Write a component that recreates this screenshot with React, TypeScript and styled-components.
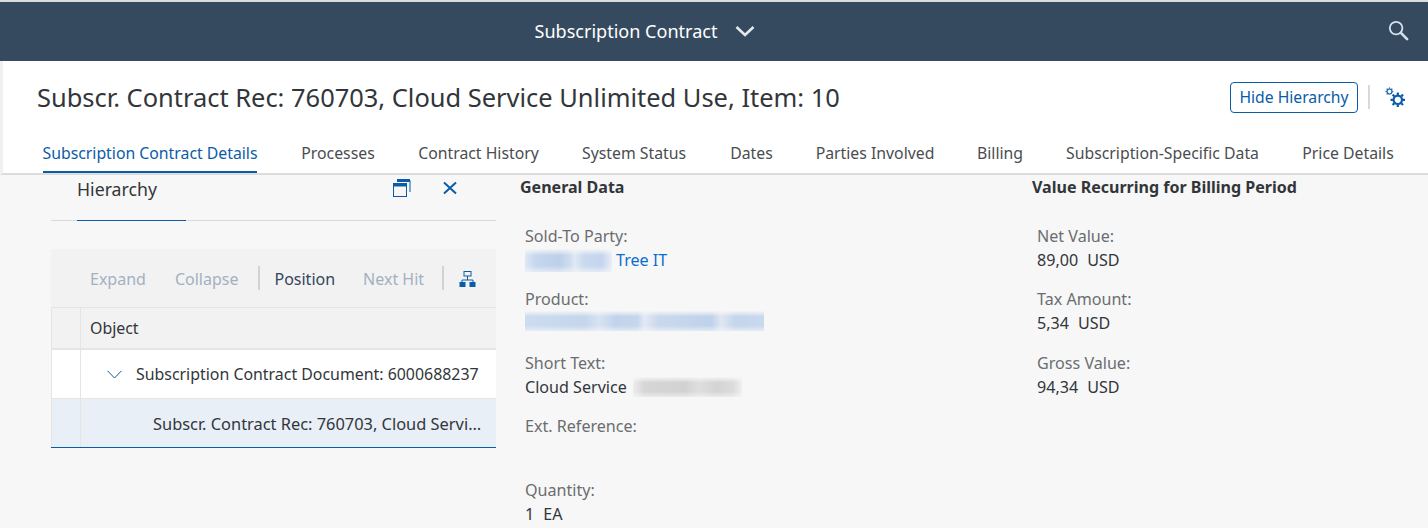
import React from "react";
import styled, { createGlobalStyle } from "styled-components";

const Global = createGlobalStyle`
  html, body { margin: 0; padding: 0; background: #f7f7f7; }
  body { font-family: "Noto Sans", "Open Sans", sans-serif; overflow: hidden; }
  #root { width: 1428px; height: 528px; overflow: hidden; }
`;

const Page = styled.div`
  width: 1428px;
  height: 528px;
  display: flex;
  flex-direction: column;
  background: #f7f7f7;
  overflow: hidden;
`;
const TopStrip = styled.div`
  height: 2px;
  flex: none;
  background: #dcdcdc;
`;
const ShellBar = styled.header`
  height: 59px;
  flex: none;
  background: #354a5f;
  display: flex;
  align-items: center;
  justify-content: center;
  position: relative;
  color: #fff;
  font-size: 18.05px;
  gap: 18px;
  padding: 0 138px 2px 0;
  box-sizing: border-box;
`;
const SearchBtn = styled.span`
  position: absolute;
  right: 19px;
  top: 18px;
  width: 21px;
  height: 21px;
`;
const ObjectHeader = styled.section`
  height: 114px;
  flex: none;
  box-sizing: border-box;
  border-left: 3px solid #eff0f2;
  background: #fff;
  border-bottom: 2px solid #dcdcdc;
  display: flex;
  flex-direction: column;
`;
const TitleRow = styled.div`
  height: 72px;
  flex: none;
  display: flex;
  align-items: center;
  padding: 0 23px 0 34px;
`;
const Title = styled.h1`
  margin: 0;
  flex: 1;
  font-size: 25.45px;
  font-weight: 400;
  color: #32363a;
  white-space: nowrap;
`;
const HideBtn = styled.button`
  height: 31px;
  width: 128px;
  box-sizing: border-box;
  border: 1px solid #0a5ca8;
  border-radius: 4px;
  background: #fff;
  color: #0a5ca8;
  font: inherit;
  font-size: 15.7px;
  padding: 0;
`;
const Sep = styled.span`
  width: 2px;
  height: 24px;
  background: #d5dadd;
  margin: 0 15px 0 10px;
`;
const Tabs = styled.nav`
  display: flex;
  padding-left: 40px;
  gap: 43px;
  height: 40px;
  flex: none;
`;
const Tab = styled.span<{ $active?: boolean; $w: number }>`
  width: ${(p) => p.$w}px;
  display: flex;
  justify-content: center;
  font-size: 15.8px;
  line-height: 1;
  padding-top: 13px;
  box-sizing: border-box;
  height: 40px;
  white-space: nowrap;
  color: ${(p) => (p.$active ? "#0a5ca8" : "#4a4d50")};
  border-bottom: ${(p) => (p.$active ? "2px solid #0a5ca8" : "none")};
`;
const Body = styled.main`
  flex: 1;
  display: flex;
  min-height: 0;
`;
const LeftPane = styled.aside`
  width: 445px;
  margin-left: 51px;
  flex: none;
`;
const PaneHead = styled.div`
  height: 46px;
  box-sizing: border-box;
  border-bottom: 1px solid #d9d9d9;
  display: flex;
  padding-left: 26px;
`;
const PaneTab = styled.div`
  width: 109px;
  height: 46px;
  box-sizing: border-box;
  border-bottom: 1px solid #0a5ca8;
  color: #32363a;
  font-size: 17.7px;
  line-height: 1;
  padding-top: 6px;
`;
const PaneIcons = styled.div`
  margin-left: auto;
  display: flex;
  align-items: flex-start;
  gap: 32px;
  padding: 3px 39px 0 0;
`;
const Toolbar = styled.div`
  margin-top: 28px;
  height: 58px;
  background: #f2f2f2;
  display: flex;
  align-items: center;
  padding: 2px 0 0 39px;
  box-sizing: border-box;
  font-size: 16px;
`;
const ToolBtn = styled.span<{ $on?: boolean; $gap?: number }>`
  color: ${(p) => (p.$on ? "#32465c" : "#a3b1bf")};
  margin-right: ${(p) => p.$gap ?? 0}px;
  white-space: nowrap;
`;
const ToolSep = styled.span<{ $right: number }>`
  width: 2px;
  height: 24px;
  margin-top: -2px;
  background: #cfd3d6;
  margin-right: ${(p) => p.$right}px;
`;
const Row = styled.div<{ $h: number; $bg: string; $line: string; $size?: number }>`
  height: ${(p) => p.$h}px;
  box-sizing: border-box;
  display: flex;
  background: ${(p) => p.$bg};
  border-top: 1px solid #e5e5e5;
  border-bottom: ${(p) => p.$line};
  color: #32363a;
  font-size: ${(p) => p.$size ?? 15.9}px;
`;
const Selector = styled.div`
  width: 30px;
  flex: none;
  box-sizing: border-box;
  border-left: 1px solid #e5e5e5;
  border-right: 1px solid #e5e5e5;
`;
const Cell = styled.div<{ $indent: number }>`
  flex: 1;
  min-width: 0;
  display: flex;
  align-items: center;
  gap: 14px;
  padding-left: ${(p) => p.$indent}px;
  white-space: nowrap;
`;
const Clipped = styled.span`
  width: 332px;
  overflow: hidden;
  text-overflow: ellipsis;
  white-space: nowrap;
`;
const Content = styled.div`
  flex: 1;
  display: grid;
  grid-template-columns: 512px 1fr;
  padding-left: 24px;
`;
const Column = styled.section`
  display: flex;
  flex-direction: column;
`;
const GroupTitle = styled.h2`
  margin: 0;
  height: 49px;
  padding-top: 1px;
  box-sizing: border-box;
  font-size: 16.05px;
  font-weight: 700;
  color: #32363a;
  white-space: nowrap;
`;
const Field = styled.div`
  height: 63.45px;
  padding-left: 5px;
  font-size: 16.1px;
  line-height: 24px;
  flex: none;
`;
const Label = styled.div`
  color: #6a6d70;
`;
const Value = styled.div<{ $gap?: number }>`
  color: #32363a;
  display: flex;
  align-items: center;
  gap: ${(p) => p.$gap ?? 9}px;
  white-space: nowrap;
`;
const LinkText = styled.span`
  color: #0a6ed1;
`;
const Redacted = styled.span<{ $w: number; $h: number; $stops: string }>`
  display: inline-block;
  width: ${(p) => p.$w}px;
  height: ${(p) => p.$h}px;
  background:
    linear-gradient(180deg, #f7f7f7f0 0%, #f7f7f700 28%, #f7f7f700 72%, #f7f7f7a0 100%),
    linear-gradient(90deg, ${(p) => p.$stops});
`;

const tabs: [string, number][] = [
  ["Processes", 76],
  ["Contract History", 119],
  ["System Status", 106],
  ["Dates", 43],
  ["Parties Involved", 118],
  ["Billing", 46],
  ["Subscription-Specific Data", 193],
  ["Price Details", 92],
];

const soldTo =
  "#dfe8f4 0%, #c6d7ee 12%, #bdd0ea 40%, #cfddf0 52%, #e0e9f4 57%, #c9d9ef 68%, #c4d5ed 88%, #e8eef6 100%";
const product =
  "#cddcf0 0%, #c4d5ec 25%, #d8e3f2 31%, #c1d3eb 38%, #c6d6ec 47%, #e2e9f3 50%, #c9d8ed 56%, #bfd2eb 78%, #dfe7f2 82%, #c4d5ec 88%, #c9d9ee 100%";
const shortText =
  "#eeeeee 0%, #d6d6d6 10%, #d2d2d2 48%, #dedede 60%, #d4d4d4 78%, #dcdcdc 92%, #f0f0f0 100%";

export default function App() {
  return (
    <Page>
      <Global />
      <TopStrip />
      <ShellBar>
        <span>Subscription Contract</span>
        <svg width="20" height="12" viewBox="0 0 20 12" fill="none">
          <path d="M1.5 2 L10 10 L18.5 2" stroke="#e4e9ee" strokeWidth="2.6" />
        </svg>
        <SearchBtn>
          <svg width="21" height="21" viewBox="0 0 22 22" fill="none" stroke="#d1e1ee">
            <circle cx="8.5" cy="8.5" r="6.6" strokeWidth="1.9" />
            <path d="M13.5 13.5 L20 20" strokeWidth="2.8" strokeLinecap="round" />
          </svg>
        </SearchBtn>
      </ShellBar>
      <ObjectHeader>
        <TitleRow>
          <Title>Subscr. Contract Rec: 760703, Cloud Service Unlimited Use, Item: 10</Title>
          <HideBtn>Hide Hierarchy</HideBtn>
          <Sep />
          <svg width="20" height="20" viewBox="0 0 20 20" fill="none" stroke="#0a5ca8">
            <circle cx="4.5" cy="4.5" r="2.5" strokeWidth="1.2" />
            <path d="M4.5 .5v1.2M.5 4.5h1.2M7.3 4.5h1M1.7 1.7l.8.8M7.3 1.7l-.8.8M1.7 7.3l.8-.8" strokeWidth="1.2" />
            <circle cx="12.8" cy="12.8" r="4.2" strokeWidth="2.2" />
            <path d="M12.8 5.5v2.4M12.8 17.7v2.3M5.5 12.8h2.4M17.7 12.8h2.3M7.6 7.6l1.7 1.7M16.3 16.3l1.7 1.7M18 7.6l-1.7 1.7M9.3 16.3l-1.7 1.7" strokeWidth="2.2" />
          </svg>
        </TitleRow>
        <Tabs>
          <Tab $active $w={214}>Subscription Contract Details</Tab>
          {tabs.map(([t, w]) => (
            <Tab key={t} $w={w}>{t}</Tab>
          ))}
        </Tabs>
      </ObjectHeader>
      <Body>
        <LeftPane>
          <PaneHead>
            <PaneTab>Hierarchy</PaneTab>
            <PaneIcons>
              <svg width="18" height="20" viewBox="0 0 18 20" fill="none">
                <path d="M4.5 2.5 H17 V14" stroke="#0a5ca8" strokeWidth="1" />
                <rect x="4" y="1" width="13" height="3" fill="#0a5ca8" />
                <rect x="0.5" y="5.5" width="13" height="13" fill="#f7f7f7" stroke="#0a5ca8" />
                <rect x="0" y="5" width="14" height="3.5" fill="#0a5ca8" />
              </svg>
              <svg width="14" height="20" viewBox="0 0 14 20" fill="none">
                <path d="M1 4.5 L13 15.5 M13 4.5 L1 15.5" stroke="#0a5ca8" strokeWidth="2" />
              </svg>
            </PaneIcons>
          </PaneHead>
          <Toolbar>
            <ToolBtn $gap={29}>Expand</ToolBtn>
            <ToolBtn $gap={20}>Collapse</ToolBtn>
            <ToolSep $right={14} />
            <ToolBtn $on $gap={28}>Position</ToolBtn>
            <ToolBtn $gap={18}>Next Hit</ToolBtn>
            <ToolSep $right={15} />
            <svg width="17" height="18" viewBox="0 0 17 18" fill="none">
              <rect x="5" y="1.5" width="7" height="4.5" stroke="#0a5ca8" />
              <path d="M8.5 6v4M3 12v-2h11v2" stroke="#0a5ca8" />
              <rect x="0.5" y="12" width="6" height="5" fill="#0a5ca8" />
              <rect x="10.5" y="12" width="6" height="5" fill="#0a5ca8" />
            </svg>
          </Toolbar>
          <Row $h={42} $bg="#f2f2f2" $line="1px solid #e5e5e5">
            <Selector />
            <Cell $indent={9}>Object</Cell>
          </Row>
          <Row $h={49} $bg="#fff" $line="none">
            <Selector />
            <Cell $indent={26}>
              <svg width="15" height="9" viewBox="0 0 15 9" fill="none">
                <path d="M0.5 0.8 L7.5 8 L14.5 0.8" stroke="#0a5ca8" strokeWidth="1" />
              </svg>
              <span>Subscription Contract Document: 6000688237</span>
            </Cell>
          </Row>
          <Row $h={50} $bg="#e8eff6" $line="1px solid #0a5ca8" $size={16.4}>
            <Selector />
            <Cell $indent={72}>
              <Clipped>Subscr. Contract Rec: 760703, Cloud Service Unlimited Use, Item: 10</Clipped>
            </Cell>
          </Row>
        </LeftPane>
        <Content>
          <Column>
            <GroupTitle>General Data</GroupTitle>
            <Field>
              <Label>Sold-To Party:</Label>
              <Value $gap={4}>
                <Redacted $w={87} $h={23} $stops={soldTo} />
                <LinkText>Tree IT</LinkText>
              </Value>
            </Field>
            <Field>
              <Label>Product:</Label>
              <Value>
                <Redacted $w={239} $h={20} $stops={product} />
              </Value>
            </Field>
            <Field>
              <Label>Short Text:</Label>
              <Value $gap={6}>
                <span>Cloud Service</span>
                <Redacted $w={109} $h={20} $stops={shortText} />
              </Value>
            </Field>
            <Field>
              <Label>Ext. Reference:</Label>
            </Field>
            <Field>
              <Label>Quantity:</Label>
              <Value>
                <span>1</span>
                <span>EA</span>
              </Value>
            </Field>
          </Column>
          <Column>
            <GroupTitle>Value Recurring for Billing Period</GroupTitle>
            <Field>
              <Label>Net Value:</Label>
              <Value>
                <span>89,00</span>
                <span>USD</span>
              </Value>
            </Field>
            <Field>
              <Label>Tax Amount:</Label>
              <Value>
                <span>5,34</span>
                <span>USD</span>
              </Value>
            </Field>
            <Field>
              <Label>Gross Value:</Label>
              <Value>
                <span>94,34</span>
                <span>USD</span>
              </Value>
            </Field>
          </Column>
        </Content>
      </Body>
    </Page>
  );
}
